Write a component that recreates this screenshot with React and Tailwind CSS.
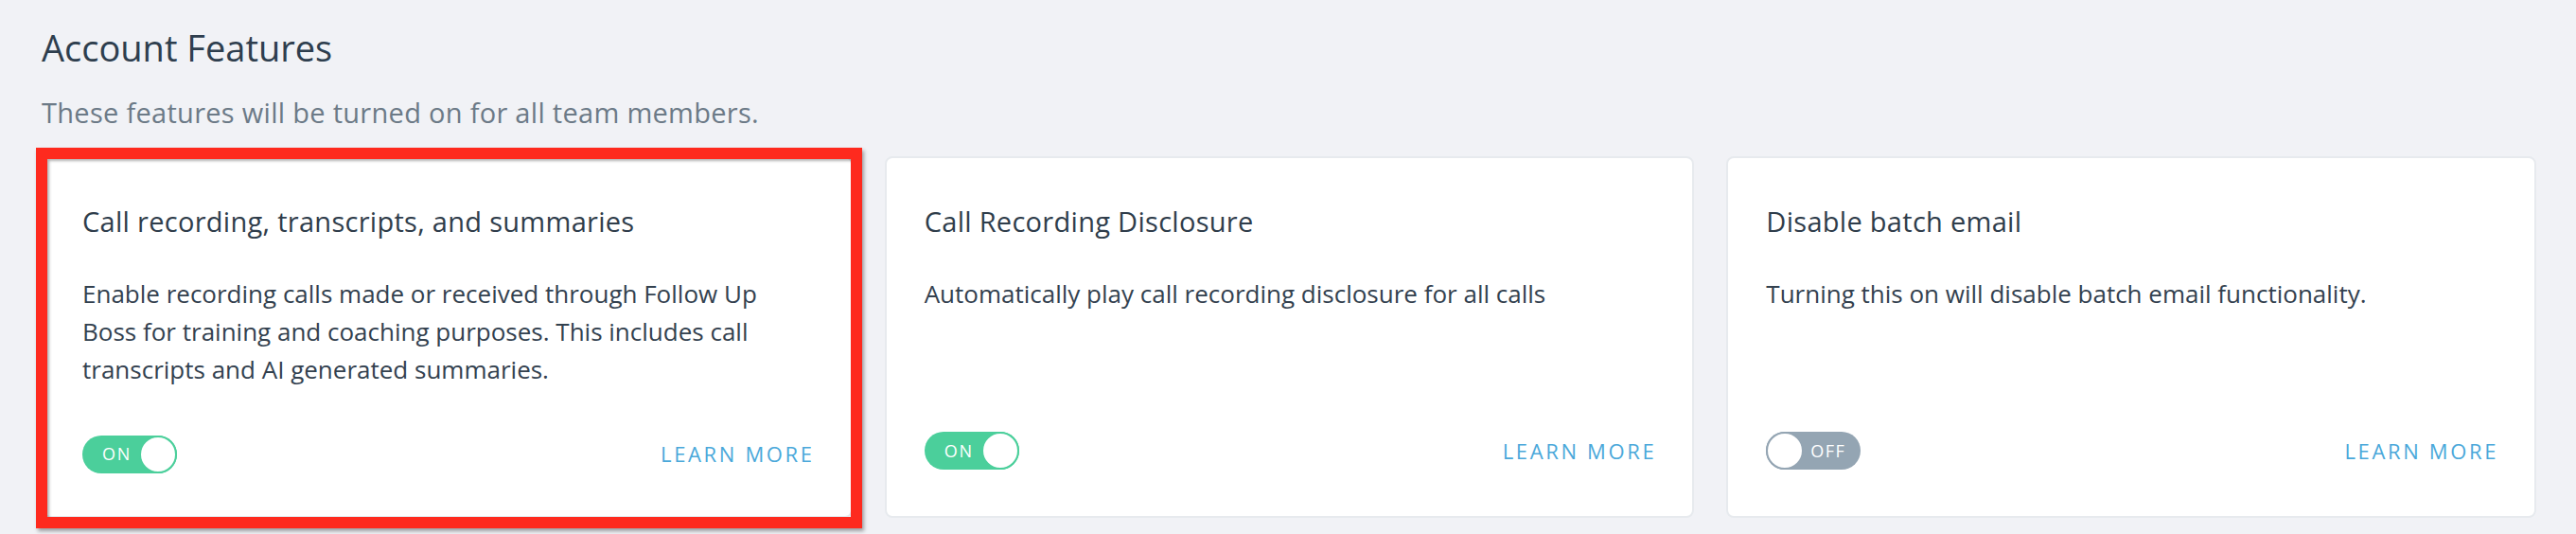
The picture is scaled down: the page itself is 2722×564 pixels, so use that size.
import React from "react";

const features = [
  {
    title: "Call recording, transcripts, and summaries",
    description:
      "Enable recording calls made or received through Follow Up Boss for training and coaching purposes. This includes call transcripts and AI generated summaries.",
    enabled: true,
    highlighted: true,
  },
  {
    title: "Call Recording Disclosure",
    description: "Automatically play call recording disclosure for all calls",
    enabled: true,
  },
  {
    title: "Disable batch email",
    description: "Turning this on will disable batch email functionality.",
    enabled: false,
  },
];

function Toggle({ on }) {
  if (on) {
    return (
      <div className="flex items-center h-[40px] w-[100px] rounded-full bg-[#4bcf9b]">
        <span className="pl-[21px] flex-1 text-[18px] font-medium tracking-[0.1em] text-white">
          ON
        </span>
        <span className="h-[40px] w-[40px] rounded-full bg-white border-2 border-[#4bcf9b]" />
      </div>
    );
  }
  return (
    <div className="flex items-center h-[40px] w-[100px] rounded-full bg-[#94a5b3]">
      <span className="h-[40px] w-[40px] rounded-full bg-white border-2 border-[#94a5b3]" />
      <span className="pl-[7px] text-[18px] font-medium tracking-[0.08em] text-white">
        OFF
      </span>
    </div>
  );
}

function FeatureCard({ feature }) {
  return (
    <div className="relative flex-1 min-w-0">
      <div className="h-full flex flex-col bg-white rounded-[8px] border-2 border-[#e7eaee] pt-[50px] pb-[49px] px-[40px]">
        <h3 className="text-[29px] leading-[1.2] tracking-[0.01em] text-[#2f3d4b]">
          {feature.title}
        </h3>
        <p className="mt-[38px] mb-[50px] text-[26px] leading-[40px] text-[#33414f]">
          {feature.description}
        </p>
        <div className="mt-auto flex items-center justify-between">
          <Toggle on={feature.enabled} />
          <a href="#" className="text-[22px] tracking-[0.12em] text-[#4aa8da] -mr-[2px]">
            LEARN MORE
          </a>
        </div>
      </div>
      {feature.highlighted && (
        <div className="pointer-events-none absolute -left-[7px] -top-[9px] -right-[10px] -bottom-[11px] border-[12px] border-[#fe2a1e] shadow-[2px_3px_4px_rgba(0,0,0,0.35),inset_2px_2px_3px_rgba(0,0,0,0.3)]" />
      )}
    </div>
  );
}

export default function App() {
  return (
    <div
      className="w-full h-[564px] bg-[#f1f2f6] overflow-hidden"
      style={{ fontFamily: "'Open Sans', Lato, sans-serif" }}
    >
      <div className="pl-[44px] pt-[28px]">
        <h2 className="text-[38px] leading-[44px] text-[#2e3e4e]">Account Features</h2>
        <p className="mt-[30px] text-[29px] leading-[34px] tracking-[0.01em] text-[#6c7a87]">
          These features will be turned on for all team members.
        </p>
      </div>
      <div className="flex gap-[34px] pl-[45px] pr-[42px] mt-[29px] h-[382px]">
        {features.map((f) => (
          <FeatureCard key={f.title} feature={f} />
        ))}
      </div>
    </div>
  );
}
